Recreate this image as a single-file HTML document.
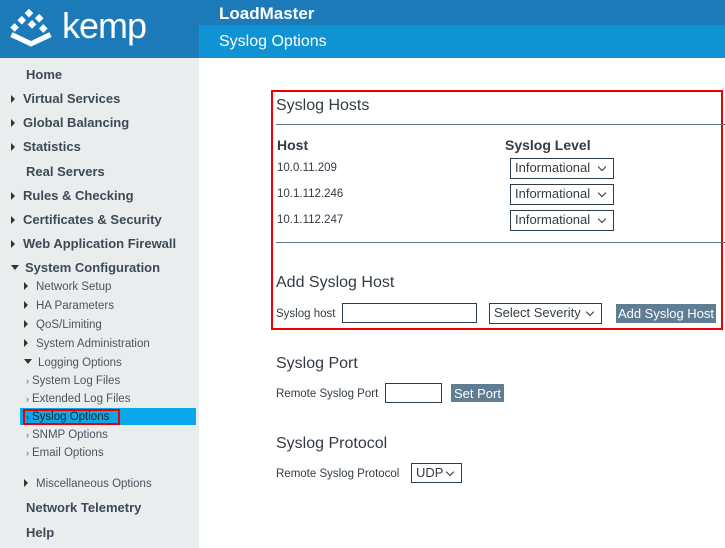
<!DOCTYPE html>
<html><head><style>
*{margin:0;padding:0;box-sizing:border-box}
body{width:725px;height:548px;overflow:hidden;font-family:"Liberation Sans","DejaVu Sans",sans-serif;background:#fff;position:relative;color:#333c45}
.hl{position:absolute;left:0;top:0;width:199px;height:58px;background:#1c7ab9}
.ht{position:absolute;left:199px;top:0;width:526px;height:25px;background:#1c7ab9;color:#fff;font-weight:bold;font-size:17px;padding:4px 0 0 20px}
.hb{position:absolute;left:199px;top:25px;width:526px;height:33px;background:#0f93d2;color:#fff;font-size:16px;padding:8px 0 0 20px}
.side{position:absolute;left:0;top:58px;width:199px;height:490px;background:#eaeded}
.n{position:absolute;font-size:13px;font-weight:bold;color:#3d4a55;white-space:nowrap}
.s{position:absolute;font-size:11.5px;color:#4a5560;white-space:nowrap}
.tri{display:inline-block;width:0;height:0;border-top:4px solid transparent;border-bottom:4px solid transparent;border-left:4px solid #333;margin-right:8px;vertical-align:0}
.tdn{display:inline-block;width:0;height:0;border-left:4px solid transparent;border-right:4px solid transparent;border-top:5px solid #333;margin-right:6px;vertical-align:2px}
.a{font-size:9px;margin-right:3px}
.t{position:absolute;white-space:nowrap}
.sel{position:absolute;border:1px solid #2c3e4c;background:#fff;font-size:13px;padding:1px 0 0 4px;height:21px}
.sel:after{content:"";position:absolute;right:8px;top:5px;width:5px;height:5px;border-right:1.5px solid #333;border-bottom:1.5px solid #333;transform:rotate(45deg)}
.btn{position:absolute;background:#5f7d93;color:#fff;font-size:13px;text-align:center;padding-top:2px}
</style></head><body>
<div class="hl">
<svg style="position:absolute;left:8px;top:9px" width="46" height="41" viewBox="0 0 44 40"><g fill="#fff"><rect x="17" y="1" width="6" height="6" transform="rotate(45 20 4)"/><rect x="27" y="6" width="6" height="6" transform="rotate(45 30 9)"/><rect x="10" y="8" width="6" height="6" transform="rotate(45 13 11)"/><rect x="20" y="12" width="6" height="6" transform="rotate(45 23 15)"/><rect x="3" y="15" width="6" height="6" transform="rotate(45 6 18)"/><rect x="31" y="16" width="6" height="6" transform="rotate(45 34 19)"/></g><path d="M3 25 L22 34 L41 25" stroke="#fff" stroke-width="5" fill="none" stroke-linejoin="round"/></svg>
<div style="position:absolute;left:62px;top:5px;color:#fff;font-size:36px;letter-spacing:-1px">kemp</div>
</div>
<div class="ht">LoadMaster</div>
<div class="hb">Syslog Options</div>
<div class="side"></div>
<div class="n" style="left:26px;top:67px">Home</div>
<div class="n" style="left:11px;top:91px"><span class="tri"></span>Virtual Services</div>
<div class="n" style="left:11px;top:115px"><span class="tri"></span>Global Balancing</div>
<div class="n" style="left:11px;top:139px"><span class="tri"></span>Statistics</div>
<div class="n" style="left:26px;top:164px">Real Servers</div>
<div class="n" style="left:11px;top:188px"><span class="tri"></span>Rules &amp; Checking</div>
<div class="n" style="left:11px;top:212px"><span class="tri"></span>Certificates &amp; Security</div>
<div class="n" style="left:11px;top:236px"><span class="tri"></span>Web Application Firewall</div>
<div class="n" style="left:11px;top:260px"><span class="tdn"></span>System Configuration</div>
<div class="s" style="left:24px;top:281px"><span class="tri"></span>Network Setup</div>
<div class="s" style="left:24px;top:300px"><span class="tri"></span>HA Parameters</div>
<div class="s" style="left:24px;top:319px"><span class="tri"></span>QoS/Limiting</div>
<div class="s" style="left:24px;top:338px"><span class="tri"></span>System Administration</div>
<div class="s" style="left:24px;top:357px"><span class="tdn"></span>Logging Options</div>
<div class="s" style="left:26px;top:375px"><span class="a">›</span>System Log Files</div>
<div class="s" style="left:26px;top:393px"><span class="a">›</span>Extended Log Files</div>
<div style="position:absolute;left:20px;top:408px;width:176px;height:17px;background:#0aa8ea"></div>
<div style="position:absolute;left:23px;top:409px;width:97px;height:16px;border:2px solid #e00"></div>
<div class="s" style="left:26px;top:411px;color:#222"><span class="a">›</span>Syslog Options</div>
<div class="s" style="left:26px;top:429px"><span class="a">›</span>SNMP Options</div>
<div class="s" style="left:26px;top:447px"><span class="a">›</span>Email Options</div>
<div class="s" style="left:24px;top:478px"><span class="tri"></span>Miscellaneous Options</div>
<div class="n" style="left:26px;top:500px">Network Telemetry</div>
<div class="n" style="left:26px;top:525px">Help</div>

<div style="position:absolute;left:271px;top:90px;width:452px;height:240px;border:2px solid #e00"></div>
<div class="t" style="left:276px;top:97px;font-size:16px">Syslog Hosts</div>
<div style="position:absolute;left:276px;top:124px;width:449px;height:1px;background:#5f7585"></div>
<div class="t" style="left:277px;top:137px;font-size:14px;font-weight:bold">Host</div>
<div class="t" style="left:505px;top:137px;font-size:14px;font-weight:bold">Syslog Level</div>
<div class="t" style="left:277px;top:162px;font-size:11.5px">10.0.11.209</div>
<div class="t" style="left:277px;top:188px;font-size:11.5px">10.1.112.246</div>
<div class="t" style="left:277px;top:214px;font-size:11.5px">10.1.112.247</div>
<div class="sel" style="left:510px;top:158px;width:104px">Informational</div>
<div class="sel" style="left:510px;top:184px;width:104px">Informational</div>
<div class="sel" style="left:510px;top:210px;width:104px">Informational</div>
<div style="position:absolute;left:276px;top:242px;width:449px;height:1px;background:#5f7585"></div>
<div class="t" style="left:276px;top:274px;font-size:16px">Add Syslog Host</div>
<div class="t" style="left:276px;top:308px;font-size:11.5px">Syslog host</div>
<div style="position:absolute;left:342px;top:303px;width:135px;height:20px;border:1px solid #2c3e4c"></div>
<div class="sel" style="left:489px;top:303px;width:113px">Select Severity</div>
<div class="btn" style="left:616px;top:304px;width:100px;height:19px">Add Syslog Host</div>
<div class="t" style="left:276px;top:355px;font-size:16px">Syslog Port</div>
<div class="t" style="left:276px;top:388px;font-size:11.5px">Remote Syslog Port</div>
<div style="position:absolute;left:385px;top:383px;width:57px;height:20px;border:1px solid #2c3e4c"></div>
<div class="btn" style="left:451px;top:384px;width:53px;height:18px">Set Port</div>
<div class="t" style="left:276px;top:435px;font-size:16px">Syslog Protocol</div>
<div class="t" style="left:276px;top:468px;font-size:11.5px">Remote Syslog Protocol</div>
<div class="sel" style="left:411px;top:463px;width:51px;height:20px">UDP</div>
</body></html>
